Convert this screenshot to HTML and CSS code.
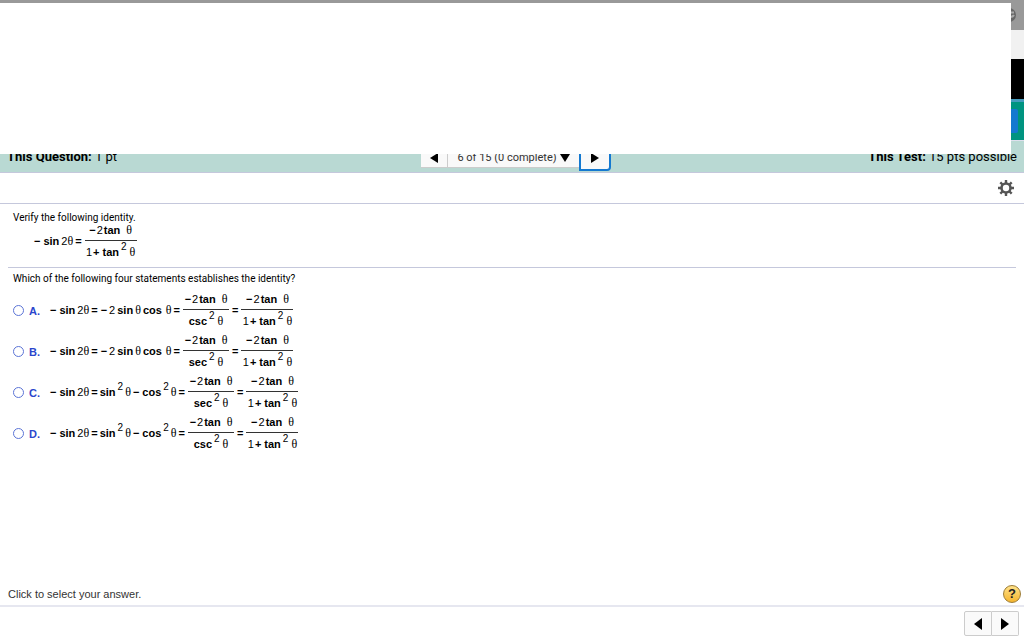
FILE: index.html
```
<!DOCTYPE html>
<html lang="en">
<head>
    <meta charset="UTF-8">
    <meta name="viewport" content="width=device-width, initial-scale=1.0">
    <title>Verify the identity</title>
    <link rel="stylesheet" href="styles.css">
</head>
<body>
    <header id="site-header">
        <div class="browser-bar">
            <svg width="16" height="16" viewBox="0 0 16 16"><circle cx="8" cy="8" r="7" fill="#666"/><path d="M9 5.5h4M9 10q3 0 4-2" stroke="#aaa" stroke-width="2" fill="none"/></svg>
        </div>
        <div class="bookmark-bar"></div>
        <div class="black-bar"></div>
        <div class="course-bar"><div class="course-button"></div></div>
    </header>
    <div id="cover"></div>

    <div id="question-bar">
        <p class="info"><b>This Question:</b> 1 pt</p>
        <div class="pager">
            <button class="prev" aria-label="Previous question"><svg width="8" height="10" viewBox="0 0 8 10"><path d="M8 0v10L0 5z"/></svg></button>
            <button class="jump">6 of 15 (0 complete) <svg width="10" height="8" viewBox="0 0 10 8"><path d="M0 0h10L5 8z"/></svg></button>
            <button class="next" aria-label="Next question"><svg width="8" height="10" viewBox="0 0 8 10"><path d="M0 0v10l8-5z"/></svg></button>
        </div>
        <p class="info right"><b>This Test:</b> 15 pts possible</p>
    </div>

    <div id="tools">
        <button class="settings" aria-label="Settings">
            <svg width="16" height="16" viewBox="0 0 16 16"><circle cx="8" cy="8" r="4.5" fill="none" stroke="#555" stroke-width="2.6"/><path d="M8 0v3M8 13v3M0 8h3M13 8h3M2.3 2.3l2.2 2.2M11.5 11.5l2.2 2.2M2.3 13.7l2.2-2.2M11.5 4.5l2.2-2.2" stroke="#555" stroke-width="2.4"/></svg>
        </button>
    </div>

    <main>
        <section class="problem">
            <p>Verify the following identity.</p>
            <div class="eq">
                <span class="op neg">−</span><b>sin</b><span>2<i>θ</i></span><span class="op">=</span>
                <span class="frac wide"><span class="num"><span class="op">−</span><span>2</span><b>tan</b><i class="far">θ</i></span><span class="den"><span>1</span><span class="op plus">+</span><b>tan</b><sup>2</sup><i>θ</i></span></span>
            </div>
        </section>

        <form class="choices">
            <p>Which of the following four statements establishes the identity?</p>
            <div class="choice">
                <input type="radio" name="answer" id="a">
                <label for="a"><span class="letter">A.</span>
                    <span class="eq">
                        <span class="op neg">−</span><b>sin</b><span>2<i>θ</i></span><span class="op rel">=</span><span class="op">−</span><span>2</span><b>sin</b><i>θ</i><b>cos</b><i class="arg">θ</i><span class="op">=</span>
                        <span class="frac"><span class="num"><span class="op">−</span><span>2</span><b>tan</b><i class="far">θ</i></span><span class="den"><b>csc</b><sup>2</sup><i>θ</i></span></span>
                        <span class="op">=</span>
                        <span class="frac wide"><span class="num"><span class="op">−</span><span>2</span><b>tan</b><i class="far">θ</i></span><span class="den"><span>1</span><span class="op plus">+</span><b>tan</b><sup>2</sup><i>θ</i></span></span>
                    </span>
                </label>
            </div>
            <div class="choice">
                <input type="radio" name="answer" id="b">
                <label for="b"><span class="letter">B.</span>
                    <span class="eq">
                        <span class="op neg">−</span><b>sin</b><span>2<i>θ</i></span><span class="op rel">=</span><span class="op">−</span><span>2</span><b>sin</b><i>θ</i><b>cos</b><i class="arg">θ</i><span class="op">=</span>
                        <span class="frac"><span class="num"><span class="op">−</span><span>2</span><b>tan</b><i class="far">θ</i></span><span class="den"><b>sec</b><sup>2</sup><i>θ</i></span></span>
                        <span class="op">=</span>
                        <span class="frac wide"><span class="num"><span class="op">−</span><span>2</span><b>tan</b><i class="far">θ</i></span><span class="den"><span>1</span><span class="op plus">+</span><b>tan</b><sup>2</sup><i>θ</i></span></span>
                    </span>
                </label>
            </div>
            <div class="choice">
                <input type="radio" name="answer" id="c">
                <label for="c"><span class="letter">C.</span>
                    <span class="eq">
                        <span class="op neg">−</span><b>sin</b><span>2<i>θ</i></span><span class="op">=</span><b>sin</b><sup>2</sup><i>θ</i><span class="op neg">−</span><b>cos</b><sup>2</sup><i>θ</i><span class="op">=</span>
                        <span class="frac"><span class="num"><span class="op">−</span><span>2</span><b>tan</b><i class="far">θ</i></span><span class="den"><b>sec</b><sup>2</sup><i>θ</i></span></span>
                        <span class="op">=</span>
                        <span class="frac wide"><span class="num"><span class="op">−</span><span>2</span><b>tan</b><i class="far">θ</i></span><span class="den"><span>1</span><span class="op plus">+</span><b>tan</b><sup>2</sup><i>θ</i></span></span>
                    </span>
                </label>
            </div>
            <div class="choice">
                <input type="radio" name="answer" id="d">
                <label for="d"><span class="letter">D.</span>
                    <span class="eq">
                        <span class="op neg">−</span><b>sin</b><span>2<i>θ</i></span><span class="op">=</span><b>sin</b><sup>2</sup><i>θ</i><span class="op neg">−</span><b>cos</b><sup>2</sup><i>θ</i><span class="op">=</span>
                        <span class="frac"><span class="num"><span class="op">−</span><span>2</span><b>tan</b><i class="far">θ</i></span><span class="den"><b>csc</b><sup>2</sup><i>θ</i></span></span>
                        <span class="op">=</span>
                        <span class="frac wide"><span class="num"><span class="op">−</span><span>2</span><b>tan</b><i class="far">θ</i></span><span class="den"><span>1</span><span class="op plus">+</span><b>tan</b><sup>2</sup><i>θ</i></span></span>
                    </span>
                </label>
            </div>
        </form>
    </main>

    <footer>
        <div class="hint">
            <p>Click to select your answer.</p>
            <button class="help" aria-label="Help">?</button>
        </div>
        <div class="nav">
            <button aria-label="Back"><svg width="8" height="12" viewBox="0 0 8 12"><path d="M8 0v12L0 6z"/></svg></button>
            <button aria-label="Forward"><svg width="8" height="12" viewBox="0 0 8 12"><path d="M0 0v12l8-6z"/></svg></button>
        </div>
    </footer>
</body>
</html>
```
FILE: styles.css
```
* {margin: 0; padding: 0; box-sizing: border-box;}

body {
    display: flex;
    flex-direction: column;
    min-height: 100vh;
    position: relative;
    background: #fff;
    color: #000;
    font-family: "Liberation Sans", Arial, sans-serif;
    font-size: 11px;
    line-height: 14px;
}
button {
    font-family: inherit;
    cursor: pointer;
}
button svg {
    display: block;
}

/* strips at the top, mostly hidden by #cover */
.browser-bar {
    display: flex;
    justify-content: flex-end;
    align-items: center;
    height: 30px;
    padding-right: 7px;
    background: #999;
}
.bookmark-bar {
    height: 29px;
    background: #f1f1f1;
}
.black-bar {
    height: 40px;
    background: #000;
}
.course-bar {
    display: flex;
    justify-content: flex-end;
    height: 42px;
    padding: 7px 6px;
    background: #009480;
    border-top: 3px solid #459bbd;
    border-bottom: 1px solid #dfe0ee;
}
.course-button {
    width: 60px;
    background: #1479d0;
    border-radius: 2px;
}
#cover {
    position: absolute;
    top: 3px;
    left: 0;
    right: 13px;
    height: 151px;
    background: #fff;
}

#question-bar {
    display: flex;
    justify-content: space-between;
    height: 32px;
    padding: 0 7px;
    background: #b9d9d3;
    border-bottom: 1px solid #c5c8dc;
    font-family: Roboto, sans-serif;
    font-size: 13px;
}
.info {
    flex: 1;
    padding-top: 9px;
}
.right {
    text-align: right;
}
.pager {
    display: flex;
    align-items: flex-start;
    margin-left: 8px;
}
.pager button {
    display: flex;
    justify-content: center;
    align-items: center;
    gap: 3px;
    height: 27px;
    padding-top: 6px;
    background: #f9f9f9;
    border: 1px solid #ccc;
    border-left: none;
    font-size: 11px;
    color: #333;
}
.pager svg {
    fill: #000;
}
.pager .prev {
    width: 27px;
}
.pager .jump {
    width: 131px;
    border-right: none;
}
.pager .next {
    width: 32px;
    height: 30px;
    padding-top: 3px;
    border: 2px solid #1479d0;
    border-radius: 0 4px 4px 0;
}

#tools {
    display: flex;
    justify-content: flex-end;
    align-items: center;
    height: 31px;
    padding-right: 10px;
    border-bottom: 1px solid #c5c8dc;
}
.settings {
    background: none;
    border: none;
}

main {
    flex: 1;
    padding: 7px 8px 0;
}
main p {
    font-family: Roboto, sans-serif;
    font-size: 10px;
}
.problem {
    padding: 0 5px 8px;
    border-bottom: 1px solid #c5c8dc;
}
.problem .eq {
    padding-left: 21px;
    margin-top: -2px;
}
.choices {
    padding: 4px 5px;
}
.choice, .choice label {
    display: flex;
    align-items: center;
}
.choices p {
    margin-bottom: 3px;
}
.choice {
    height: 41px;
}
.choice input {
    appearance: none;
    width: 11px;
    height: 11px;
    margin: 2px 5px 0 0;
    border: 1px solid #5b74d6;
    border-radius: 50%;
}
.choice input:checked {
    background: #5b74d6;
}
.letter {
    width: 21px;
    padding-top: 2px;
    font-weight: bold;
    color: #2a46cc;
}

/* equations */
.eq {
    display: flex;
    align-items: center;
    gap: 2px;
}
.eq i {
    font-family: "Liberation Serif", serif;
    font-size: 12px;
    font-style: normal;
}
.eq sup {
    margin-top: -10px;
    font-size: 10px;
}
.op {
    font-weight: bold;
}
.neg {
    margin-right: 1px;
}
.rel {
    margin-right: 1px;
}
.arg {
    margin-left: 2px;
}
.frac {
    width: 46px;
    margin: 0 1px;
}
.wide {
    width: 52px;
}
.num, .den {
    display: flex;
    justify-content: center;
    align-items: center;
    height: 18px;
    gap: 1px;
}
.num {
    padding-bottom: 3px;
    border-bottom: 1px solid #333;
}
.den {
    padding-top: 4px;
}
.den sup {
    margin-left: 1px;
    margin-right: 2px;
}
.far {
    margin-left: 5px;
}
.plus {
    margin-right: 2px;
}

footer .hint {
    display: flex;
    justify-content: space-between;
    align-items: center;
    padding: 0 3px 2px 8px;
    border-bottom: 2px solid #e6e7f0;
    color: #333;
}
.help {
    width: 18px;
    height: 18px;
    border: 1px solid #9d7c35;
    border-radius: 50%;
    background: linear-gradient(#ffe28a, #f5b52e);
    font-size: 13px;
    font-weight: bold;
    line-height: 16px;
    color: #222;
}
.nav {
    display: flex;
    justify-content: flex-end;
    padding: 4px 5px;
}
.nav button {
    display: flex;
    justify-content: center;
    align-items: center;
    width: 28px;
    height: 25px;
    background: #fafafa;
    border: 1px solid #ccc;
    border-radius: 2px 0 0 2px;
}
.nav button + button {
    width: 27px;
    border-left: none;
    border-radius: 0 2px 2px 0;
}
```
